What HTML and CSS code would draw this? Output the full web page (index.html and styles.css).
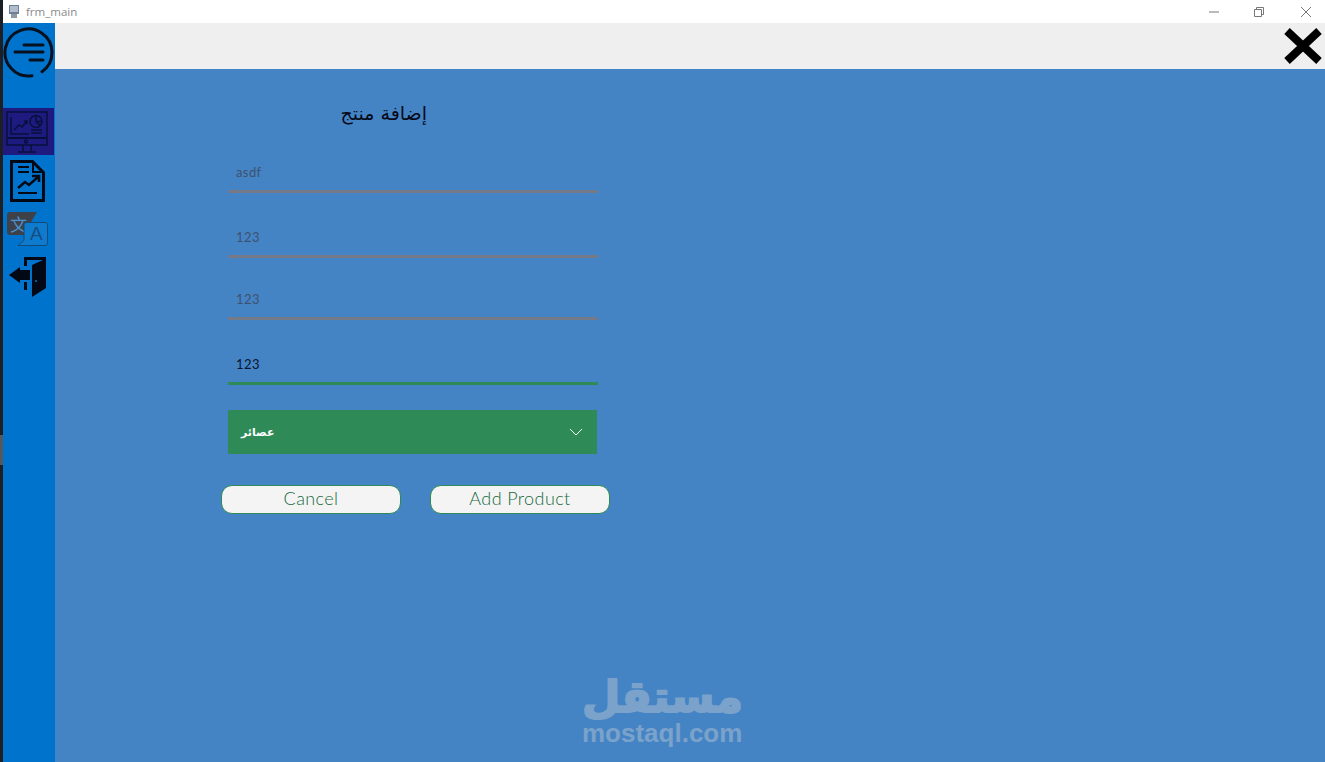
FILE: index.html
```html
<!DOCTYPE html>
<html lang="ar">
<head>
  <meta charset="UTF-8">
  <meta name="viewport" content="width=device-width, initial-scale=1.0">
  <title>frm_main</title>
  <link rel="stylesheet" href="styles.css">
</head>
<body>

  <div class="desktop-edge"></div>

  <div class="window">

    <!-- Barra de titulo -->
    <div class="titlebar" dir="ltr">
      <svg class="app-icon" width="12" height="14" viewBox="0 0 12 14">
        <rect x="1" y="0" width="10" height="9" fill="#6d7f95"/>
        <rect x="2" y="1" width="8" height="6" fill="#aebccb"/>
        <rect x="3" y="9" width="6" height="4" fill="#8b98a6"/>
      </svg>
      <span class="titlebar-name">frm_main</span>
      <div class="win-buttons">
        <svg width="12" height="12" viewBox="0 0 12 12"><path d="M0 6h10" stroke="#777" fill="none"/></svg>
        <svg width="12" height="12" viewBox="0 0 12 12"><path d="M.5 3.500h7v7h-7zM2.500 3.500v-2h7v7h-2" stroke="#777" fill="none"/></svg>
        <svg class="win-close" width="12" height="12" viewBox="0 0 12 12"><path d="M1 1l10 10M11 1L1 11" stroke="#777" fill="none"/></svg>
      </div>
    </div>

    <div class="app">

      <!-- Menu lateral -->
      <div class="sidebar" dir="ltr">
        <svg class="menu-btn" width="52" height="52" viewBox="0 0 52 52">
          <path d="M29 49.700A23.500 23.500 0 1 1 39 45.700" fill="none" stroke="#07101f" stroke-width="3" stroke-linecap="round"/>
          <path d="M21 19h19M12 26h28M27 34h13" fill="none" stroke="#07101f" stroke-width="3" stroke-linecap="round"/>
        </svg>

        <div class="side-item side-item-active">
          <svg width="42" height="42" viewBox="0 0 42 42" fill="none" stroke="#07103a" stroke-width="1.500">
            <rect x="1" y="1" width="40" height="33"/>
            <path d="M1 27h40" stroke-width="2"/>
            <path d="M17 34v6M25 34v6M12 41h18" stroke-width="1.500"/>
            <circle cx="20" cy="30.500" r="1.500"/>
            <path d="M5 6v17h18"/>
            <path d="M8 19l5-5 3 2 5-6M18 10h3v3"/>
            <circle cx="30" cy="10.500" r="6"/>
            <path d="M30 4.500V10.500h6M30 10.500l4 4"/>
            <path d="M25 19h11M25 22h11"/>
          </svg>
        </div>

        <div class="side-item side-item-doc">
          <svg width="35" height="42" viewBox="0 0 35 42" fill="none" stroke="#020814" stroke-width="3">
            <path d="M1.500 1.500h21l11 11v28h-32z"/>
            <path d="M23 3v9h9" stroke-width="2"/>
            <path d="M8 7h11M8 12h11" stroke-width="2"/>
            <path d="M8 28l7-6 4 3 9-8M22 16h7v6" stroke-width="2.500"/>
            <path d="M8 33h19" stroke-width="2"/>
          </svg>
        </div>

        <div class="side-item side-item-lang">
          <svg width="42" height="36" viewBox="0 0 42 36">
            <path d="M3 0h27l-6 10v13H3a3 3 0 0 1-3-3V3a3 3 0 0 1 3-3z" fill="#3f4148"/>
            <text class="icon-zh" x="3" y="19">文</text>
            <path d="M19 10.500h19a2.500 2.500 0 0 1 2.500 2.500v18a2.500 2.500 0 0 1-2.500 2.500H11l6-5V13a2.500 2.500 0 0 1 2-2.500z" fill="#0e7bcf" stroke="#134a78"/>
            <text class="icon-a" x="23" y="28">A</text>
          </svg>
        </div>

        <div class="side-item side-item-exit">
          <svg width="38" height="42" viewBox="0 0 38 42" fill="#020814">
            <path d="M15 1h22v31l-14 9V9l11-5H18v6h-3z"/>
            <path d="M15 26h3v8h-3z"/>
            <path d="M0 19l11-8v3h10v10H11v3z"/>
            <circle cx="27" cy="25" r="1" fill="#0074cc"/>
          </svg>
        </div>
      </div>

      <div class="content" dir="ltr">

        <div class="topbar">
          <svg width="38" height="36" viewBox="0 0 38 36">
            <path d="M3 3l32 30M35 3L3 33" stroke="#000" stroke-width="8" fill="none"/>
          </svg>
        </div>

        <div class="main">
          <div class="form">
            <h2 class="form-title" dir="rtl">إضافة منتج</h2>

            <div class="field"><span>asdf</span></div>
            <div class="field"><span>123</span></div>
            <div class="field field-short"><span>123</span></div>
            <div class="field field-focus"><span>123</span></div>

            <div class="select">
              <span class="select-text">عصائر</span>
              <svg width="14" height="8" viewBox="0 0 14 8"><path d="M1 1l6 6 6-6" fill="none" stroke="#fff"/></svg>
            </div>

            <div class="buttons">
              <button>Cancel</button>
              <button>Add Product</button>
            </div>
          </div>

          <!-- Marca d'agua -->
          <div class="watermark">
            <div class="watermark-ar">مستقل</div>
            <div class="watermark-en">mostaql.com</div>
          </div>
        </div>
      </div>
    </div>
  </div>

</body>
</html>
```

FILE: styles.css
```css
/* Estilos gerais */
html, body {
  height: 100%;
}

body {
  margin: 0;
  display: flex;
  overflow: hidden;
  font-family: "Lato", Arial, sans-serif;
  color: #2c3e50;
  background-color: #1c1f24;
}

.desktop-edge {
  width: 3px;
  flex-shrink: 0;
  background: linear-gradient(#1c1f24 435px, #55585c 435px, #55585c 465px, #1c1f24 465px);
}

.window {
  flex: 1;
  display: flex;
  flex-direction: column;
  min-width: 0;
}

/* Barra de titulo */
.titlebar {
  height: 23px;
  flex-shrink: 0;
  display: flex;
  align-items: center;
  background-color: #fff;
  padding-left: 5px;
}

.app-icon {
  margin-right: 6px;
}

.titlebar-name {
  font-family: "Open Sans", Arial, sans-serif;
  font-size: 11.500px;
  color: #8a8a8a;
}

.win-buttons {
  margin-left: auto;
  display: flex;
  gap: 33px;
  padding-right: 13px;
}

.win-close {
  margin-left: 1px;
}

.app {
  flex: 1;
  display: flex;
  min-height: 0;
}

/* Menu lateral */
.sidebar {
  width: 52px;
  flex-shrink: 0;
  display: flex;
  flex-direction: column;
  background-color: #0074cc;
}

.menu-btn {
  margin-top: 3px;
}

.side-item {
  display: flex;
  justify-content: center;
  align-items: center;
  box-sizing: border-box;
}

.side-item-active {
  width: 51px;
  height: 47px;
  margin-top: 30px;
  padding-right: 4px;
  background-color: #1e1a80;
}

.side-item-doc {
  width: 48px;
  height: 42px;
  margin-top: 5px;
}

.side-item-lang {
  width: 50px;
  height: 36px;
  margin-top: 10px;
}

.side-item-exit {
  width: 50px;
  height: 42px;
  margin-top: 8px;
}

.icon-zh {
  font-family: "Noto Sans CJK SC", sans-serif;
  font-size: 17px;
  fill: #4a93d3;
}

.icon-a {
  font-family: "Liberation Sans", sans-serif;
  font-size: 19px;
  fill: #164e80;
}

/* Area principal */
.content {
  flex: 1;
  display: flex;
  flex-direction: column;
  min-width: 0;
}

.topbar {
  height: 46px;
  flex-shrink: 0;
  display: flex;
  justify-content: flex-end;
  align-items: center;
  padding-right: 3px;
  background-color: #efefef;
}

.main {
  flex: 1;
  position: relative;
  background-color: #4584c4;
}

.form {
  width: 389px;
  margin-left: 166px;
}

.form-title {
  margin: 0;
  padding: 31px 183px 2px 0;
  height: 26px;
  font-family: "DejaVu Sans", sans-serif;
  font-size: 19px;
  font-weight: normal;
  line-height: 26px;
  color: #050a1a;
}

/* Campos */
.field {
  width: 370px;
  height: 36px;
  margin: 29px 0 0 7px;
  box-sizing: border-box;
  display: flex;
  align-items: center;
  padding: 0 8px 4px 8px;
  border-bottom: 3px solid #757a88;
  font-size: 13px;
  letter-spacing: 0.4px;
  color: #3c5270;
}

.field-short {
  margin-top: 26px;
}

.field-focus {
  margin-top: 29px;
  border-bottom-color: #2e8b57;
  color: #0a1330;
}

/* Lista */
.select {
  width: 369px;
  height: 44px;
  margin: 25px 0 0 7px;
  box-sizing: border-box;
  display: flex;
  justify-content: space-between;
  align-items: center;
  padding: 0 14px 0 13px;
  background-color: #2e8b57;
  border-radius: 1px;
}

.select-text {
  font-family: "DejaVu Sans", sans-serif;
  font-size: 11px;
  font-weight: bold;
  color: #fff;
}

/* Botoes */
.buttons {
  display: flex;
  justify-content: space-between;
  margin-top: 31px;
}

.buttons button {
  width: 180px;
  height: 29px;
  padding: 0 0 3px;
  background-color: #f4f4f4;
  border: 1px solid #2e8b57;
  border-radius: 11px;
  font-family: "Lato", Arial, sans-serif;
  font-size: 18px;
  font-weight: 300;
  letter-spacing: 0.4px;
  color: #17693c;
}

/* Marca d'agua */
.watermark {
  position: absolute;
  left: 527px;
  top: 602px;
  width: 160px;
  text-align: center;
  color: #7ba2cb;
  font-family: "DejaVu Sans", sans-serif;
  font-weight: bold;
}

.watermark-ar {
  font-size: 44px;
  line-height: 52px;
  -webkit-text-stroke: 2px #7ba2cb;
}

.watermark-en {
  font-family: "Liberation Sans", sans-serif;
  font-size: 26px;
  line-height: 20px;
}
```
